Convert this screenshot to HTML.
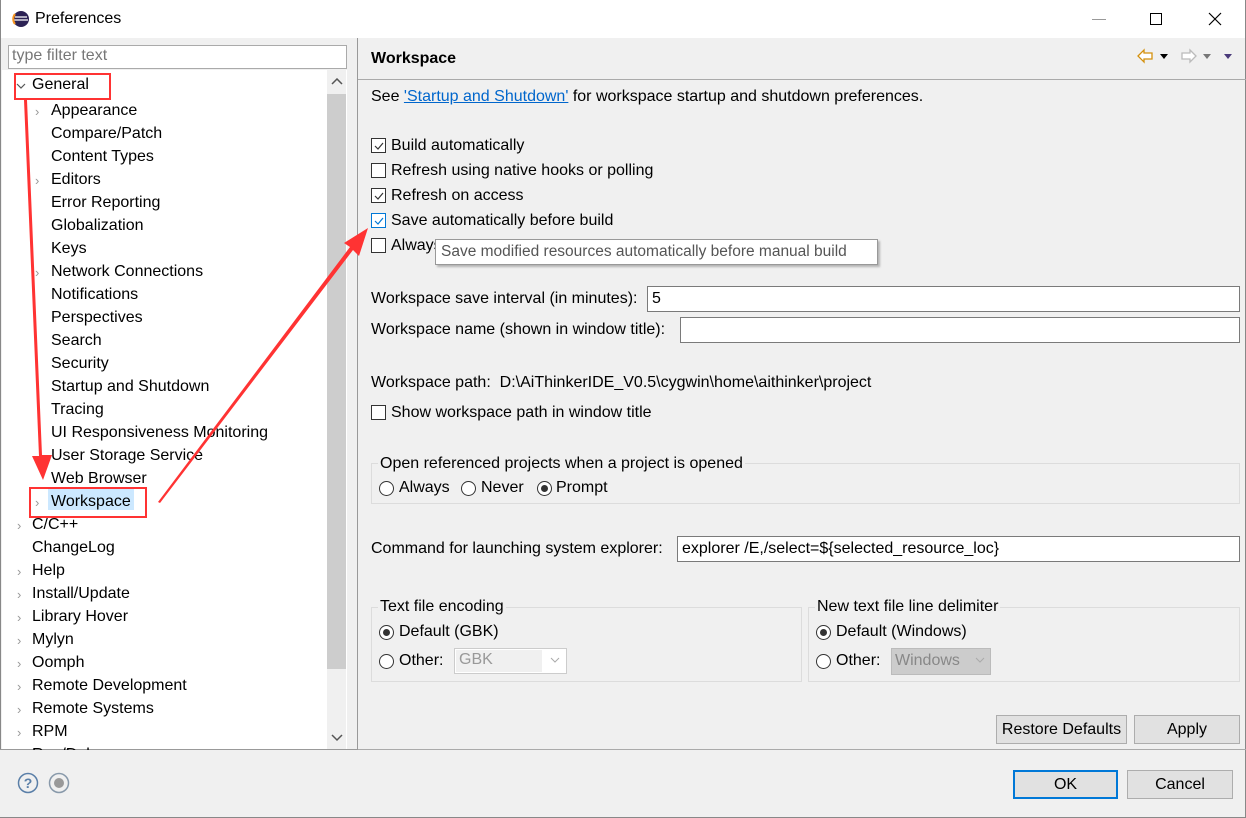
<!DOCTYPE html>
<html><head><style>
*{margin:0;padding:0;box-sizing:border-box}
body{width:1246px;height:818px;background:#f0f0f0;font-family:"Liberation Sans","Noto Sans CJK SC",sans-serif;font-size:16px;color:#000;position:relative;overflow:hidden}
.a{position:absolute;white-space:nowrap}
.cb{position:absolute;width:15px;height:15px;border:1px solid #333;background:#fff}
.rd{position:absolute;width:15px;height:15px;border:1px solid #333;border-radius:50%;background:#fff}
.rd.on::after{content:"";position:absolute;left:3px;top:3px;width:7px;height:7px;border-radius:50%;background:#333}
.in{position:absolute;background:#fff;border:1px solid #7a7a7a;height:26px;padding:3px 4px}
.grp{position:absolute;border:1px solid #dcdcdc}
.btn{position:absolute;background:#e1e1e1;border:1px solid #adadad;text-align:center;line-height:27px}
</style></head><body>
<div class="a" style="left:0;top:0;width:1246px;height:38px;background:#fff"></div>
<div class="a" style="left:0;top:0;width:1px;height:818px;background:#888"></div>
<div class="a" style="left:1245px;top:0;width:1px;height:818px;background:#888"></div>
<div class="a" style="left:0;top:817px;width:1246px;height:1px;background:#888"></div>
<svg class="a" style="left:12px;top:10px" width="18" height="18"><circle cx="9" cy="9" r="8" fill="#2c2255"/><path d="M3 7h12M2 10h14" stroke="#fff" stroke-width="1.3"/><path d="M3 4a8 8 0 0 0 0 10" stroke="#f7941e" stroke-width="2" fill="none"/></svg>
<div class="a" style="left:35px;top:10px;font-size:16px">Preferences</div>
<div class="a" style="left:1092px;top:19px;width:14px;height:1px;background:#999"></div>
<div class="a" style="left:1150px;top:13px;width:12px;height:12px;border:1px solid #000"></div>
<svg class="a" style="left:1208px;top:12px" width="14" height="14"><path d="M1 1L13 13M13 1L1 13" stroke="#000" stroke-width="1.2"/></svg>

<!-- left tree -->
<div class="a" style="left:8px;top:45px;width:339px;height:24px;background:#fff;border:1px solid #aaa;color:#777;padding:1px 3px;font-size:16px">type filter text</div>
<div class="a" style="left:2px;top:70px;width:345px;height:679px;background:#fff"></div>
<div class="a" style="left:327px;top:70px;width:19px;height:679px;background:#f0f0f0"></div>
<div class="a" style="left:327px;top:94px;width:19px;height:575px;background:#cdcdcd"></div>
<svg class="a" style="left:331px;top:78px" width="12" height="8"><path d="M1 6l5-5 5 5" stroke="#555" stroke-width="1.5" fill="none"/></svg>
<svg class="a" style="left:331px;top:734px" width="12" height="8"><path d="M1 1l5 5 5-5" stroke="#555" stroke-width="1.5" fill="none"/></svg>
<div class="a" style="left:0;top:749px;width:358px;height:1px;background:#999"></div>
<div class="a" style="left:357px;top:38px;width:1px;height:712px;background:#999"></div>

<div class="a" style="left:48px;top:489px;width:86px;height:21px;background:#cce8ff"></div>
<svg class="a" style="left:16px;top:83px" width="10" height="6"><path d="M1 1l4 4 4-4" stroke="#555" stroke-width="1.2" fill="none"/></svg>
<div class="a" style="left:32px;top:76px;">General</div>
<div class="a" style="left:51px;top:99px;line-height:23px">Appearance<br>Compare/Patch<br>Content Types<br>Editors<br>Error Reporting<br>Globalization<br>Keys<br>Network Connections<br>Notifications<br>Perspectives<br>Search<br>Security<br>Startup and Shutdown<br>Tracing<br>UI Responsiveness Monitoring<br>User Storage Service<br>Web Browser<br>Workspace</div>
<div class="a" style="left:35px;top:100px;line-height:23px;color:#999;font-size:13px">›<br><br><br>›<br><br><br><br>›<br><br><br><br><br><br><br><br><br><br>›</div>
<div class="a" style="left:32px;top:513px;line-height:23px">C/C++<br>ChangeLog<br>Help<br>Install/Update<br>Library Hover<br>Mylyn<br>Oomph<br>Remote Development<br>Remote Systems<br>RPM<br>Run/Debug</div>
<div class="a" style="left:17px;top:514px;line-height:23px;color:#999;font-size:13px">›<br><br>›<br>›<br>›<br>›<br>›<br>›<br>›<br>›</div>
<div class="a" style="left:0;top:750px;width:357px;height:67px;background:#f0f0f0"></div>

<svg class="a" style="left:17px;top:772px" width="54" height="22"><circle cx="11" cy="11" r="9.5" fill="none" stroke="#5a7fa8" stroke-width="1.5"/><text x="11" y="16" font-size="14" font-weight="bold" fill="#5a7fa8" text-anchor="middle" font-family="Liberation Sans">?</text><circle cx="42" cy="11" r="9.5" fill="none" stroke="#8899aa" stroke-width="1.5"/><circle cx="42" cy="11" r="5" fill="#999"/></svg>

<!-- right -->
<div class="a" style="left:371px;top:50px;font-weight:bold;font-size:16px">Workspace</div>
<svg class="a" style="left:1136px;top:48px" width="110" height="18">
<path d="M2 8l6-6v3h8v6h-8v3z" fill="#fff" stroke="#d4900c" stroke-width="1.3"/>
<path d="M24 6h8l-4 5z" fill="#000"/>
<path d="M60 8l-6-6v3h-8v6h8v3z" fill="#fff" stroke="#bbb" stroke-width="1.3"/>
<path d="M67 6h8l-4 5z" fill="#777"/>
<path d="M88 6h8l-4 5z" fill="#4a3a7a"/>
</svg>
<div class="a" style="left:358px;top:79px;width:888px;height:1px;background:#aaa"></div>
<div class="a" style="left:371px;top:88px">See <span style="color:#0066cc;text-decoration:underline">'Startup and Shutdown'</span> for workspace startup and shutdown preferences.</div>

<div class="cb" style="left:371px;top:138px"></div><div class="a" style="left:391px;top:137px">Build automatically</div>
<div class="cb" style="left:371px;top:163px"></div><div class="a" style="left:391px;top:162px">Refresh using native hooks or polling</div>
<div class="cb" style="left:371px;top:188px"></div><div class="a" style="left:391px;top:187px">Refresh on access</div>
<div class="cb" style="left:371px;top:213px;border-color:#0078d7"></div><div class="a" style="left:391px;top:212px">Save automatically before build</div>
<div class="cb" style="left:371px;top:238px"></div><div class="a" style="left:391px;top:237px">Always</div>
<svg class="a" style="left:373px;top:140px" width="12" height="90"><path d="M2 6l3 3 5-6M2 56l3 3 5-6" stroke="#333" stroke-width="1.2" fill="none"/><path d="M2 81l3 3 5-6" stroke="#0078d7" stroke-width="1.2" fill="none"/></svg>
<div class="a" style="left:435px;top:239px;width:443px;height:26px;background:#fff;border:1px solid #999;box-shadow:2px 2px 2px rgba(0,0,0,.25);color:#555;padding:3px 5px;font-size:15.5px">Save modified resources automatically before manual build</div>

<div class="a" style="left:371px;top:290px">Workspace save interval (in minutes):</div>
<div class="in" style="left:647px;top:286px;width:593px">5</div>
<div class="a" style="left:371px;top:321px">Workspace name (shown in window title):</div>
<div class="in" style="left:680px;top:317px;width:560px"></div>
<div class="a" style="left:371px;top:374px">Workspace path:&nbsp; D:\AiThinkerIDE_V0.5\cygwin\home\aithinker\project</div>
<div class="cb" style="left:371px;top:405px"></div><div class="a" style="left:391px;top:404px">Show workspace path in window title</div>

<div class="grp" style="left:371px;top:463px;width:869px;height:41px"></div>
<div class="a" style="left:378px;top:455px;background:#f0f0f0;padding:0 2px">Open referenced projects when a project is opened</div>
<div class="rd" style="left:379px;top:481px"></div><div class="a" style="left:399px;top:479px">Always</div>
<div class="rd" style="left:461px;top:481px"></div><div class="a" style="left:481px;top:479px">Never</div>
<div class="rd on" style="left:537px;top:481px"></div><div class="a" style="left:556px;top:479px">Prompt</div>

<div class="a" style="left:371px;top:540px">Command for launching system explorer:</div>
<div class="in" style="left:677px;top:536px;width:563px">explorer /E,/select=${selected_resource_loc}</div>

<div class="grp" style="left:371px;top:607px;width:431px;height:75px"></div>
<div class="a" style="left:378px;top:598px;background:#f0f0f0;padding:0 2px">Text file encoding</div>
<div class="rd on" style="left:379px;top:625px"></div><div class="a" style="left:399px;top:623px">Default (GBK)</div>
<div class="rd" style="left:379px;top:654px"></div><div class="a" style="left:399px;top:652px">Other:</div>
<div class="a" style="left:454px;top:648px;width:113px;height:26px;background:#fff;border:1px solid #ccc"></div>
<div class="a" style="left:456px;top:650px;width:86px;height:22px;background:#f0f0f0;color:#999;padding:1px 3px">GBK</div>
<svg class="a" style="left:550px;top:657px" width="10" height="6"><path d="M1 1l4 4 4-4" stroke="#aaa" fill="none"/></svg>

<div class="grp" style="left:808px;top:607px;width:432px;height:75px"></div>
<div class="a" style="left:815px;top:598px;background:#f0f0f0;padding:0 2px">New text file line delimiter</div>
<div class="rd on" style="left:816px;top:625px"></div><div class="a" style="left:836px;top:623px">Default (Windows)</div>
<div class="rd" style="left:816px;top:654px"></div><div class="a" style="left:836px;top:652px">Other:</div>
<div class="a" style="left:891px;top:648px;width:100px;height:27px;background:#ccc;border:1px solid #bbb;color:#888;padding:3px 3px">Windows</div>
<svg class="a" style="left:975px;top:657px" width="10" height="6"><path d="M1 1l4 4 4-4" stroke="#aaa" fill="none"/></svg>

<div class="btn" style="left:996px;top:715px;width:131px;height:29px">Restore Defaults</div>
<div class="btn" style="left:1134px;top:715px;width:106px;height:29px">Apply</div>
<div class="a" style="left:358px;top:749px;width:888px;height:1px;background:#aaa"></div>
<div class="btn" style="left:1013px;top:770px;width:105px;height:29px;border:2px solid #0078d7;line-height:25px">OK</div>
<div class="btn" style="left:1127px;top:770px;width:106px;height:29px">Cancel</div>

<!-- annotations -->
<div class="a" style="left:14px;top:73px;width:97px;height:27px;border:2px solid #f33"></div>
<div class="a" style="left:29px;top:487px;width:118px;height:31px;border:2px solid #f33"></div>
<svg class="a" style="left:0;top:0" width="1246" height="818">
<polygon points="24,100 27,100 42,455 52,455 43,480 32,456 39,456" fill="#f33"/>
<polygon points="158,502 160,503 353,250 359,256 368,228 344,243 350,247" fill="#f33"/>
</svg>
</body></html>
